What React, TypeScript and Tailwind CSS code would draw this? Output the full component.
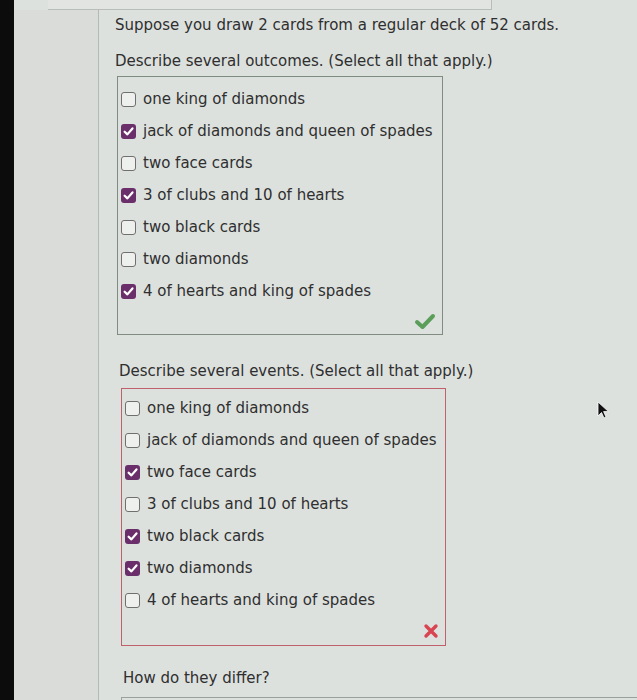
import React from 'react'

interface Option {
  label: string
  checked: boolean
}

const outcomes: Option[] = [
  { label: 'one king of diamonds', checked: false },
  { label: 'jack of diamonds and queen of spades', checked: true },
  { label: 'two face cards', checked: false },
  { label: '3 of clubs and 10 of hearts', checked: true },
  { label: 'two black cards', checked: false },
  { label: 'two diamonds', checked: false },
  { label: '4 of hearts and king of spades', checked: true },
]

const events: Option[] = [
  { label: 'one king of diamonds', checked: false },
  { label: 'jack of diamonds and queen of spades', checked: false },
  { label: 'two face cards', checked: true },
  { label: '3 of clubs and 10 of hearts', checked: false },
  { label: 'two black cards', checked: true },
  { label: 'two diamonds', checked: true },
  { label: '4 of hearts and king of spades', checked: false },
]

const Box: React.FC<{ checked: boolean }> = ({ checked }) =>
  checked ? (
    <span className="flex h-[15px] w-[15px] shrink-0 items-center justify-center rounded-[3px] bg-[#6a2f6a]">
      <svg width="11" height="11" viewBox="0 0 10 10">
        <path d="M1.5 5.2 L4 7.6 L8.6 2.2" fill="none" stroke="#fff" strokeWidth="2" strokeLinecap="round" strokeLinejoin="round" />
      </svg>
    </span>
  ) : (
    <span className="h-[15px] w-[15px] shrink-0 rounded-[3px] border border-[#6f6f6f] bg-[#eef0ee]" />
  )

const OptionList: React.FC<{
  options: Option[]
  border: string
  mark: React.ReactNode
  className: string
  markHeight: string
}> = ({ options, border, mark, className, markHeight }) => (
  <div className={`flex flex-col border pl-[3px] pr-[6px] ${border} ${className}`}>
    {options.map((o, i) => (
      <div key={i} className="flex h-[32px] shrink-0 items-center gap-[7px]">
        <Box checked={o.checked} />
        <span>{o.label}</span>
      </div>
    ))}
    <div className={`flex shrink-0 items-center justify-end ${markHeight}`}>{mark}</div>
  </div>
)

export default function App() {
  return (
    <div className="flex h-[700px] w-[637px] overflow-hidden bg-[#dde1de] font-['DejaVu_Sans',sans-serif] text-[15px] text-[#2f2f2f]">
      <div className="w-[14px] shrink-0 bg-[#0c0c0c]" />
      <div className="flex flex-1 flex-col">
        <div className="h-[10px] shrink-0">
          <div className="ml-[34px] h-[10px] w-[444px] border-b border-r border-[#b9bdba] bg-[#e1e4e1]" />
        </div>
        <div className="flex flex-1">
          <div className="w-[85px] shrink-0 border-r border-[#b5b9b6] bg-[#d9dcd9]" />
          <div className="flex flex-1 flex-col">
            <p className="ml-[16px] mt-[6px] leading-[18px]">Suppose you draw 2 cards from a regular deck of 52 cards.</p>
            <p className="ml-[16px] mt-[18px] leading-[18px]">Describe several outcomes. (Select all that apply.)</p>
            <OptionList
              options={outcomes}
              border="border-[#7f8c82]"
              className="ml-[18px] mt-[6px] w-[326px] pt-[6px]"
              markHeight="h-[27px]"
              mark={
                <svg width="22" height="18" viewBox="0 0 22 18">
                  <path d="M3 10 L8.5 15 L19 4" fill="none" stroke="#5a9e5a" strokeWidth="4" strokeLinecap="round" strokeLinejoin="round" />
                </svg>
              }
            />
            <p className="ml-[20px] mt-[27px] leading-[18px]">Describe several events. (Select all that apply.)</p>
            <OptionList
              options={events}
              border="border-[#c0606a]"
              className="ml-[22px] mt-[8px] w-[325px] pt-[3px]"
              markHeight="h-[29px]"
              mark={
                <svg width="16" height="16" viewBox="0 0 16 16">
                  <path d="M3 3 L13 13 M13 3 L3 13" fill="none" stroke="#d84450" strokeWidth="3.4" strokeLinecap="round" />
                </svg>
              }
            />
            <p className="ml-[24px] mt-[23px] leading-[18px]">How do they differ?</p>
            <div className="ml-[22px] mt-[10px] h-[40px] w-[520px] shrink-0 border border-[#9aa09c]" />
          </div>
        </div>
      </div>
      <svg className="absolute left-[597px] top-[401px]" width="14" height="20" viewBox="0 0 14 20">
        <path d="M1 1 L1 15 L4.5 11.5 L7 17 L9 16 L6.6 10.6 L11.5 10.6 Z" fill="#111" stroke="#fff" strokeWidth="0.8" />
      </svg>
    </div>
  )
}
